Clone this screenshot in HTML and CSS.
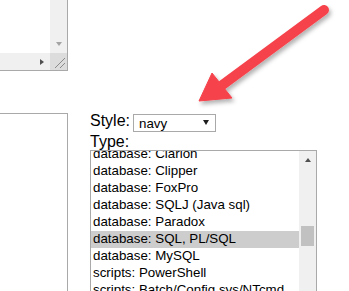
FILE: index.html
```html
<!DOCTYPE html>
<html lang="en">
<head>
  <meta charset="UTF-8" />
  <title>Highlighter - Options</title>
  <link rel="stylesheet" href="styles.css">
</head>
<body>
  <div class="page">
    <div class="left-col">
      <!-- source editor (scrolled to its bottom-right corner) -->
      <div class="editor">
        <div class="editor-text"></div>
        <div class="vscroll"><span class="arrow-down"></span></div>
        <div class="hscroll"><span class="arrow-right"></span></div>
        <div class="grip">
          <svg width="17" height="17" viewBox="0 0 17 17">
            <path d="M5 15 L15 5 M10 15 L15 10" stroke="#8a8a8a" stroke-width="1" fill="none" />
          </svg>
        </div>
      </div>
      <!-- output box -->
      <div class="output"></div>
    </div>

    <div class="options">
      <div class="style-row">
        <label class="field-label">Style:</label>
        <div class="select">
          <span class="select-value">navy</span>
          <span class="caret"></span>
        </div>
      </div>
      <div class="type-label">Type:</div>
      <div class="listbox">
        <ul class="list">
          <li>database: Clarion</li>
          <li>database: Clipper</li>
          <li>database: FoxPro</li>
          <li>database: SQLJ (Java sql)</li>
          <li>database: Paradox</li>
          <li class="selected">database: SQL, PL/SQL</li>
          <li>database: MySQL</li>
          <li>scripts: PowerShell</li>
          <li>scripts: Batch/Config.sys/NTcmd</li>
        </ul>
        <div class="lb-scroll">
          <span class="arrow-up"></span>
          <span class="thumb"></span>
        </div>
      </div>
    </div>

    <!-- annotation arrow drawn over the screenshot -->
    <svg class="pointer" width="349" height="291" viewBox="0 0 349 291">
      <defs>
        <filter id="shade" x="-20%" y="-20%" width="140%" height="140%">
          <feDropShadow dx="2" dy="3" stdDeviation="2" flood-color="#000" flood-opacity="0.3" />
        </filter>
      </defs>
      <g filter="url(#shade)" fill="#f5434c" stroke="#f5434c">
        <path d="M324 10 L221 86" stroke-width="10" stroke-linecap="round" fill="none" />
        <polygon points="199,101 212,73 232,98" stroke-width="1" stroke-linejoin="round" />
      </g>
    </svg>
  </div>
</body>
</html>
```

FILE: styles.css
```css
body {
  margin: 0;
  background: #fff;
  font-family: "Liberation Sans", Arial, sans-serif;
  color: #000;
  overflow: hidden;
}

.page {
  position: relative;
  display: flex;
  width: 349px;
  height: 291px;
  overflow: hidden;
}

.left-col {
  width: 68px;
  flex-shrink: 0;
}

.editor {
  display: grid;
  grid-template-columns: 1fr 17px;
  grid-template-rows: 1fr 17px;
  height: 71px;
  box-sizing: border-box;
  border-right: 1px solid #a9a9a9;
  border-bottom: 1px solid #a9a9a9;
}

.editor-text {
  background: #fff;
}

.vscroll {
  display: flex;
  flex-direction: column;
  justify-content: flex-end;
  align-items: center;
  padding-bottom: 7px;
  background: #f0f0f0;
}

.arrow-down {
  width: 0;
  height: 0;
  border-left: 3.5px solid transparent;
  border-right: 3.5px solid transparent;
  border-top: 4px solid #a3a3a3;
}

.hscroll {
  display: flex;
  justify-content: flex-end;
  align-items: center;
  padding-right: 6px;
  background: #f0f0f0;
}

.arrow-right {
  width: 0;
  height: 0;
  border-top: 3.5px solid transparent;
  border-bottom: 3.5px solid transparent;
  border-left: 4px solid #505050;
}

.grip {
  background: #dcdcdc;
}

.grip svg {
  display: block;
}

.output {
  margin-top: 42px;
  height: 178px;
  border-top: 1px solid #a9a9a9;
  border-right: 1px solid #a9a9a9;
}

.options {
  margin-left: 22px;
  width: 227px;
}

.style-row {
  display: flex;
  align-items: flex-start;
  gap: 3px;
  margin-top: 112px;
  height: 21px;
}

.field-label,
.type-label {
  font-size: 16px;
  line-height: 18px;
}

.select {
  display: flex;
  align-items: center;
  justify-content: space-between;
  margin-top: 2px;
  width: 83px;
  height: 18px;
  box-sizing: border-box;
  padding: 0 6px 0 5px;
  border: 1px solid #a9a9a9;
  font-size: 13.33px;
}

.caret {
  width: 0;
  height: 0;
  margin-top: -1px;
  border-left: 3.5px solid transparent;
  border-right: 3.5px solid transparent;
  border-top: 5px solid #1e1e1e;
}

.type-label {
  height: 17px;
}

.listbox {
  display: flex;
  height: 141px;
  border: 1px solid #a9a9a9;
  border-bottom: none;
  overflow: hidden;
}

.list {
  flex: 1;
  list-style: none;
  margin: -5px 0 0;
  padding: 0;
  font-size: 13.33px;
}

.list li {
  height: 17px;
  box-sizing: border-box;
  padding: 0 2px 2px;
  line-height: 15px;
  white-space: nowrap;
}

.list li.selected {
  background: #cdcdcd;
}

.lb-scroll {
  display: flex;
  flex-direction: column;
  align-items: center;
  width: 17px;
  flex-shrink: 0;
  background: #f0f0f0;
}

.arrow-up {
  margin-top: 7px;
  width: 0;
  height: 0;
  border-left: 3.5px solid transparent;
  border-right: 3.5px solid transparent;
  border-bottom: 4px solid #505050;
}

.thumb {
  margin-top: 64px;
  width: 13px;
  height: 20px;
  background: #c1c1c1;
}

.pointer {
  position: absolute;
  left: 0;
  top: 0;
  pointer-events: none;
}
```
